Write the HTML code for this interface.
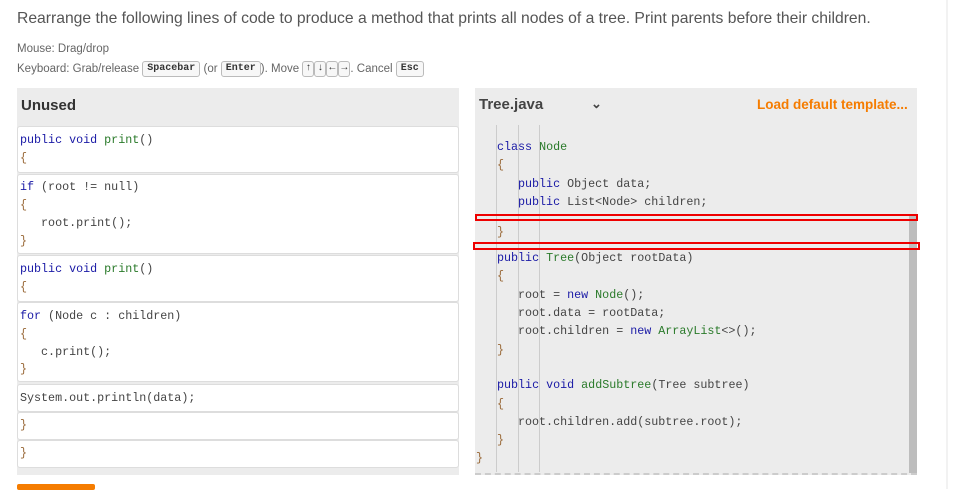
<!DOCTYPE html>
<html><head><meta charset="utf-8"><style>
body{margin:0;width:962px;height:489px;overflow:hidden;background:#fff;font-family:"Liberation Sans",sans-serif;position:relative}
.a{position:absolute}
.m{font-family:"Liberation Mono",monospace;font-size:11.7px;color:#444;white-space:pre}
.k{color:#1a1aa6}.f{color:#2a7a2a}.b{color:#9a6a3a}
.kbd{display:inline-block;border:1px solid #bbb;border-radius:3px;font-family:"Liberation Mono",monospace;font-weight:bold;font-size:10px;padding:0 4px;line-height:14px;color:#333;background:#f7f7f7;vertical-align:middle}
.blk{position:absolute;left:17px;width:440px;background:#fff;border:1px solid #ddd;border-radius:3px}
.blk .m{position:absolute;left:2px}
</style></head><body>
<div class="a" style="left:17px;top:10px;font-size:15.7px;color:#555">Rearrange the following lines of code to produce a method that prints all nodes of a tree. Print parents before their children.</div>
<div class="a" style="left:17px;top:43px;font-size:11.5px;color:#666">Mouse: Drag/drop</div>
<div class="a" style="left:17px;top:61px;font-size:11.5px;color:#666">Keyboard: Grab/release <span class="kbd">Spacebar</span> (or <span class="kbd">Enter</span>). Move <span class="kbd" style="padding:0 2px">↑</span><span class="kbd" style="padding:0 2px">↓</span><span class="kbd" style="padding:0 2px">←</span><span class="kbd" style="padding:0 2px">→</span>. Cancel <span class="kbd">Esc</span></div>

<div class="a" style="left:17px;top:88px;width:442px;height:387px;background:#ececec"></div>
<div class="a" style="left:21px;top:97px;font-size:15px;font-weight:bold;color:#333">Unused</div>

<div class="blk" style="top:126px;height:45px"><div class="m" style="top:6px"><span class="k">public void</span> <span class="f">print</span>()</div><div class="m b" style="top:24px">{</div></div>
<div class="blk" style="top:174px;height:78px"><div class="m" style="top:5px"><span class="k">if</span> (root != null)</div><div class="m b" style="top:23px">{</div><div class="m" style="top:41px">   root.print();</div><div class="m b" style="top:59px">}</div></div>
<div class="blk" style="top:255px;height:45px"><div class="m" style="top:6px"><span class="k">public void</span> <span class="f">print</span>()</div><div class="m b" style="top:24px">{</div></div>
<div class="blk" style="top:302px;height:78px"><div class="m" style="top:6px"><span class="k">for</span> (Node c : children)</div><div class="m b" style="top:24px">{</div><div class="m" style="top:42px">   c.print();</div><div class="m b" style="top:59px">}</div></div>
<div class="blk" style="top:384px;height:26px"><div class="m" style="top:6px">System.out.println(data);</div></div>
<div class="blk" style="top:412px;height:26px"><div class="m b" style="top:5px">}</div></div>
<div class="blk" style="top:440px;height:26px"><div class="m b" style="top:5px">}</div></div>
<div class="a" style="left:17px;top:484px;width:78px;height:6px;background:#f57c00;border-radius:2px"></div>

<div class="a" style="left:475px;top:88px;width:442px;height:387px;background:#ececec;border-bottom:2px dashed #ccc;box-sizing:border-box"></div>
<div class="a" style="left:909px;top:215px;width:8px;height:258px;background:#bdbdbd"></div>
<div class="a" style="left:946px;top:0;width:2px;height:489px;background:#f2f2f2"></div>
<div class="a" style="left:479px;top:96px;font-size:15px;font-weight:bold;color:#444">Tree.java</div>
<div class="a" style="left:591px;top:96px;font-size:13px;font-weight:bold;color:#444">⌄</div>
<div class="a" style="left:757px;top:97px;font-size:13.5px;font-weight:bold;color:#f57c00">Load default template...</div>
<div class="a" style="left:496px;top:125px;width:1px;height:347px;background:#ccc"></div>
<div class="a" style="left:518px;top:125px;width:1px;height:347px;background:#ccc"></div>
<div class="a" style="left:539px;top:125px;width:1px;height:347px;background:#ccc"></div>

<div class="a m" style="left:497px;top:140px"><span class="k">class</span> <span class="f">Node</span></div>
<div class="a m b" style="left:497px;top:158px">{</div>
<div class="a m" style="left:518px;top:177px"><span class="k">public</span> Object data;</div>
<div class="a m" style="left:518px;top:195px"><span class="k">public</span> List&lt;Node&gt; children;</div>
<div class="a m b" style="left:497px;top:225px">}</div>
<div class="a m" style="left:497px;top:251px"><span class="k">public</span> <span class="f">Tree</span>(Object rootData)</div>
<div class="a m b" style="left:497px;top:269px">{</div>
<div class="a m" style="left:518px;top:288px">root = <span class="k">new</span> <span class="f">Node</span>();</div>
<div class="a m" style="left:518px;top:306px">root.data = rootData;</div>
<div class="a m" style="left:518px;top:324px">root.children = <span class="k">new</span> <span class="f">ArrayList</span>&lt;&gt;();</div>
<div class="a m b" style="left:497px;top:343px">}</div>
<div class="a m" style="left:497px;top:378px"><span class="k">public void</span> <span class="f">addSubtree</span>(Tree subtree)</div>
<div class="a m b" style="left:497px;top:397px">{</div>
<div class="a m" style="left:518px;top:415px">root.children.add(subtree.root);</div>
<div class="a m b" style="left:497px;top:433px">}</div>
<div class="a m b" style="left:476px;top:451px">}</div>

<div class="a" style="left:475px;top:214px;width:443px;height:7px;border:2.5px solid #e00;box-sizing:border-box"></div>
<div class="a" style="left:473px;top:242px;width:447px;height:8px;border:2.5px solid #e00;box-sizing:border-box"></div>
</body></html>
